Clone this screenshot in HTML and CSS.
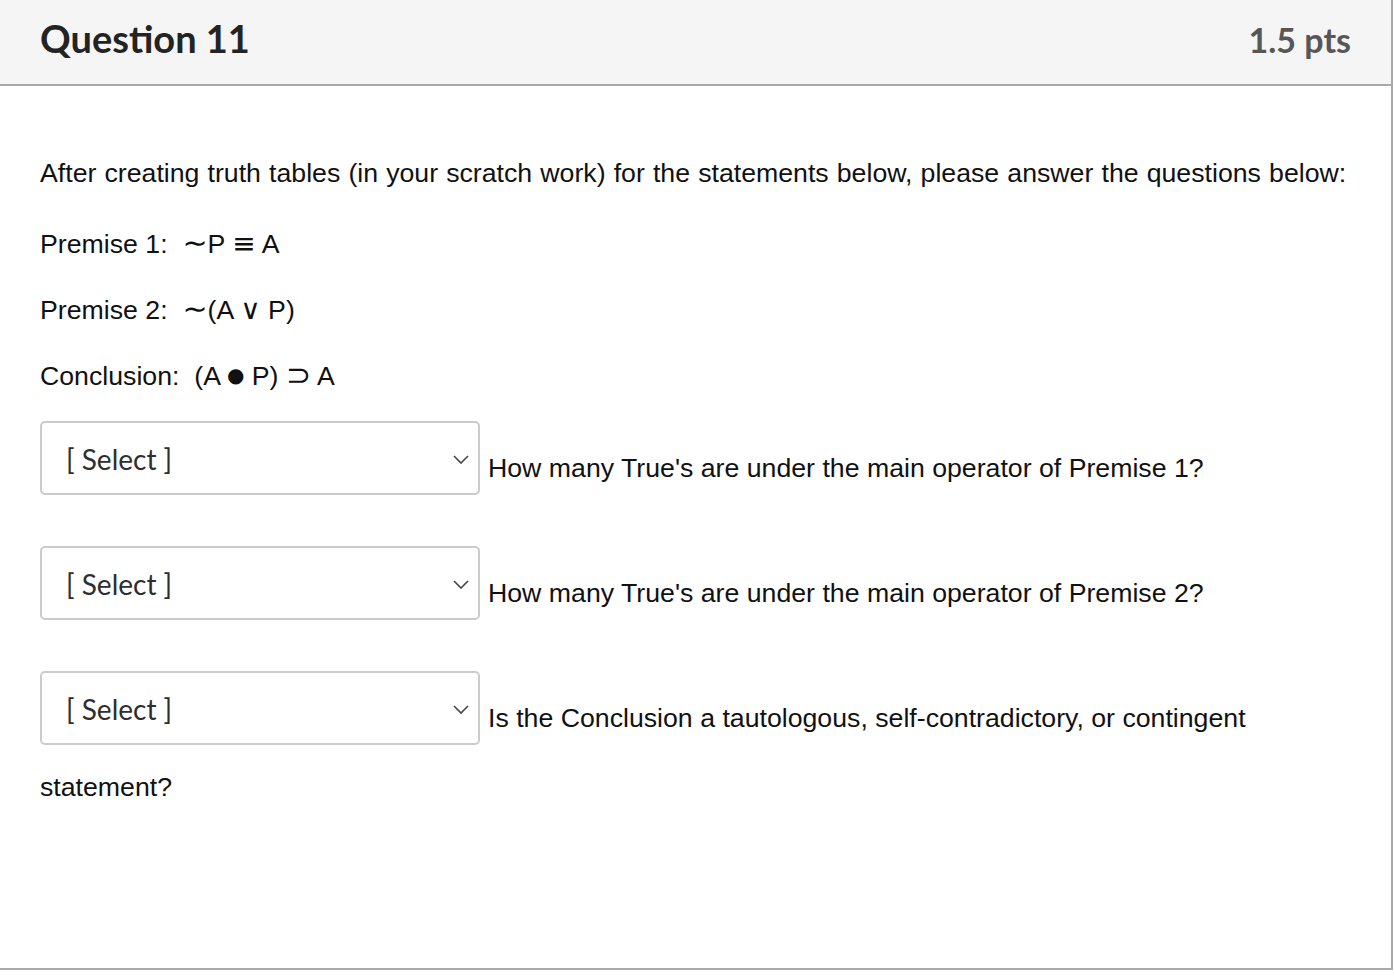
FILE: index.html
```html
<!DOCTYPE html>
<html lang="en">
<head>
<meta charset="utf-8">
<title>Question 11</title>
<link rel="stylesheet" href="styles.css">
</head>
<body>
<div class="card">
  <div class="header">
    <h2 class="title">Question 11</h2>
    <div class="pts">1.5 pts</div>
  </div>
  <div class="content">
    <p class="intro">After creating truth tables (in your scratch work) for the statements below, please answer the questions below:</p>
    <p class="line">Premise 1:&nbsp; <span class="sym tilde">∼</span>P <span class="sym">≡</span> A</p>
    <p class="line">Premise 2:&nbsp; <span class="sym tilde">∼</span>(A <span class="sym">∨</span> P)</p>
    <p class="line last">Conclusion:&nbsp; (A <span class="sym dot">●</span> P) <span class="sym big">⊃</span> A</p>
    <div class="row"><span class="sel"><span class="sel-text">[ Select ]</span><svg class="chev" width="16" height="9" viewBox="0 0 16 9"><path d="M1 1 L8 8 L15 1" fill="none" stroke="#444" stroke-width="1.6"/></svg></span><span class="qt">How many True's are under the main operator of Premise 1?</span></div>
    <div class="row"><span class="sel"><span class="sel-text">[ Select ]</span><svg class="chev" width="16" height="9" viewBox="0 0 16 9"><path d="M1 1 L8 8 L15 1" fill="none" stroke="#444" stroke-width="1.6"/></svg></span><span class="qt">How many True's are under the main operator of Premise 2?</span></div>
    <div class="row"><span class="sel"><span class="sel-text">[ Select ]</span><svg class="chev" width="16" height="9" viewBox="0 0 16 9"><path d="M1 1 L8 8 L15 1" fill="none" stroke="#444" stroke-width="1.6"/></svg></span><span class="qt">Is the Conclusion a tautologous, self-contradictory, or contingent</span> <span class="qt">statement?</span></div>
  </div>
</div>
</body>
</html>
```
FILE: styles.css
```css
html, body {
  margin: 0;
  padding: 0;
  background: #ffffff;
}

.card {
  box-sizing: border-box;
  width: 1393px;
  height: 970px;
  border-right: 2px solid #a9a9a9;
  border-bottom: 2px solid #a9a9a9;
  background: #ffffff;
}

.header {
  box-sizing: border-box;
  height: 86px;
  padding: 16px 40px 0 40px;
  background: #f5f5f5;
  border-bottom: 2px solid #a9a9a9;
  display: flex;
  align-items: baseline;
  justify-content: space-between;
  font-family: Lato, "Liberation Sans", sans-serif;
  font-weight: 700;
}

.title {
  margin: 0;
  font-size: 38px;
  line-height: 1.2;
  color: #232323;
  font-weight: 700;
}

.pts {
  font-size: 34px;
  line-height: 1.2;
  color: #575757;
}

.content {
  padding: 69px 40px 0 40px;
  font-family: "Liberation Sans", Arial, "DejaVu Sans", sans-serif;
  font-size: 26.7px;
  line-height: 36px;
  color: #111111;
}

.intro {
  margin: 0 0 35px 0;
  word-spacing: 0.7px;
}

.line {
  margin: 0 0 30px 0;
}

.line.last {
  margin-bottom: 27px;
}

.sym {
  font-family: "DejaVu Sans", sans-serif;
  font-size: 28px;
  line-height: 1;
}

.tilde {
  font-size: 30px;
}

.big {
  font-size: 30px;
}

.dot {
  font-size: 20px;
  vertical-align: 3px;
}

.row {
  margin-bottom: 27px;
}

.sel {
  box-sizing: border-box;
  display: inline-flex;
  align-items: flex-start;
  justify-content: space-between;
  width: 440px;
  height: 74px;
  padding: 19px 9px 0 24px;
  margin: 0 8px 24px 0;
  border: 2px solid #cbcbcb;
  border-radius: 5px;
  background: #ffffff;
  vertical-align: 7px;
  font-family: Lato, "Liberation Sans", sans-serif;
  font-size: 28px;
  line-height: 34px;
  color: #2e2e2e;
}

.chev {
  margin-top: 13px;
}
```
